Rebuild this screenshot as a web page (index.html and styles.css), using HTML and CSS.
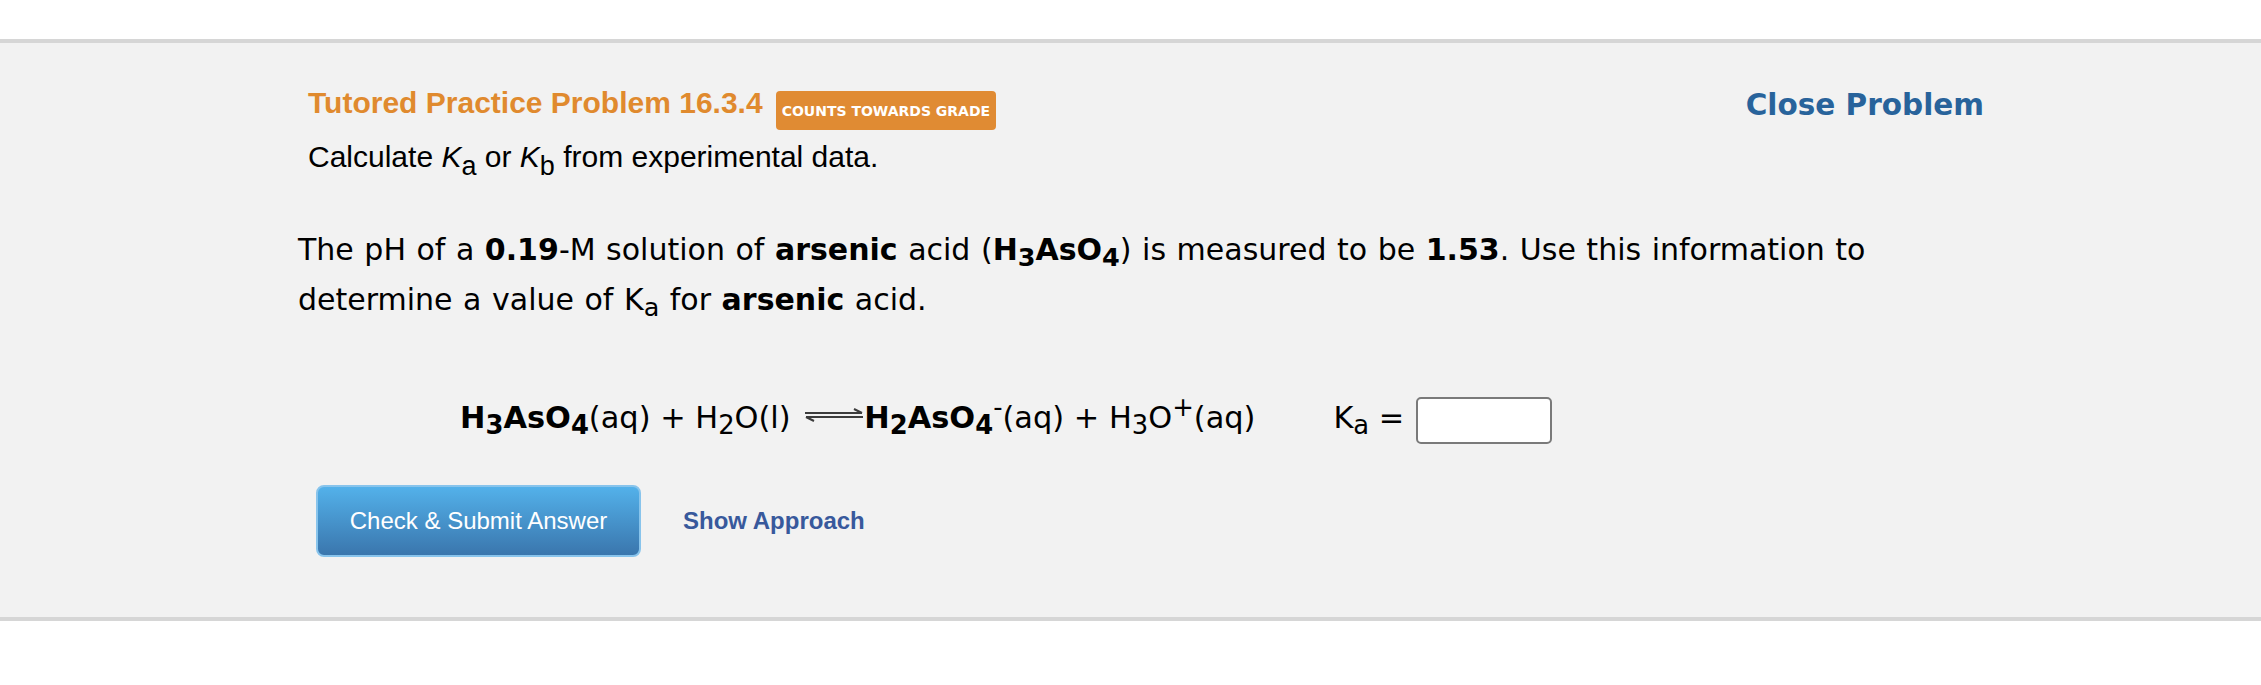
FILE: index.html
```html
<!DOCTYPE html>
<html lang="en">
<head>
<meta charset="utf-8">
<title>Tutored Practice Problem 16.3.4</title>
<link rel="stylesheet" href="styles.css">
</head>
<body>
<section class="panel">
  <div class="content">
    <header class="head">
      <div class="title-group">
        <h1 class="title">Tutored Practice Problem 16.3.4</h1>
        <span class="badge">COUNTS TOWARDS GRADE</span>
      </div>
      <a class="close" href="#">Close Problem</a>
    </header>
    <p class="subtitle">Calculate <i>K</i><sub>a</sub> or <i>K</i><sub>b</sub> from experimental data.</p>
    <p class="problem">The pH of a <b>0.19</b>-M solution of <b>arsenic</b> acid (<b>H<sub>3</sub>AsO<sub>4</sub></b>) is measured to be <b>1.53</b>. Use this information to determine a value of K<sub>a</sub> for <b>arsenic</b> acid.</p>
    <div class="equation-row">
      <div class="equation"><b>H<sub>3</sub>AsO<sub>4</sub></b>(aq) + H<sub>2</sub>O(l) <svg class="arrow" width="60" height="14" viewBox="0 0 60 14"><path d="M1 5H58M58 5L50 1M2 9H59M2 9L10 13" fill="none" stroke="#3c3c3c" stroke-width="2"/></svg><b>H<sub>2</sub>AsO<sub>4</sub></b><sup>-</sup>(aq) + H<sub>3</sub>O<sup>+</sup>(aq)</div>
      <label class="answer"><span class="answer-label">K<sub>a</sub> =</span><input class="answer-input" type="text"></label>
    </div>
    <div class="actions">
      <button class="submit" type="button">Check &amp; Submit Answer</button>
      <a class="approach" href="#">Show Approach</a>
    </div>
  </div>
</section>
</body>
</html>
```
FILE: styles.css
```css
html, body {
  margin: 0;
  padding: 0;
  background: #ffffff;
}

.panel {
  margin-top: 39px;
  background: #f2f2f2;
  border-top: 4px solid #d6d6d6;
  border-bottom: 4px solid #d6d6d6;
}

.content {
  padding: 40px 277px 60px 298px;
}

.head {
  display: flex;
  justify-content: space-between;
  align-items: flex-start;
  padding-left: 10px;
}

.title-group {
  display: flex;
  align-items: flex-start;
  gap: 13px;
}

.title {
  margin: 0;
  font-family: "Liberation Sans", Arial, sans-serif;
  font-weight: bold;
  font-size: 30px;
  line-height: 39px;
  color: #e08a2e;
}

.badge {
  margin-top: 8px;
  height: 39px;
  box-sizing: border-box;
  padding: 2px 6px 0;
  background: #e08b33;
  border-radius: 4px;
  color: #ffffff;
  font-family: "DejaVu Sans", Verdana, sans-serif;
  font-weight: bold;
  font-size: 14px;
  line-height: 37px;
  white-space: nowrap;
}

.close {
  margin-top: 3px;
  font-family: "DejaVu Sans", Verdana, sans-serif;
  font-weight: bold;
  font-size: 29.5px;
  line-height: 39px;
  color: #28639b;
  text-decoration: none;
}

sub, sup {
  line-height: 0;
}

.subtitle {
  margin: 7px 0 0;
  padding-left: 10px;
  font-family: "Liberation Sans", Arial, sans-serif;
  font-size: 30px;
  line-height: 40px;
  color: #000;
}

.subtitle sub {
  font-size: 0.9em;
  vertical-align: -0.28em;
}

.problem {
  margin: 48px 0 0;
  font-family: "DejaVu Sans", Verdana, sans-serif;
  font-size: 30px;
  word-spacing: 1px;
  line-height: 50px;
  color: #000;
}

.problem sub {
  font-size: 0.85em;
  vertical-align: -0.25em;
}

.equation-row {
  display: flex;
  align-items: flex-start;
  margin-top: 72px;
  padding-left: 162px;
}

.equation, .answer-label {
  margin-top: 2px;
  font-family: "DejaVu Sans", Verdana, sans-serif;
  font-size: 30.4px;
  line-height: 38px;
  color: #000;
  white-space: nowrap;
}

.equation sub, .answer-label sub {
  font-size: 0.85em;
  vertical-align: -0.25em;
}

.equation sup {
  font-size: 0.85em;
  vertical-align: 0.45em;
}

.arrow {
  margin-left: 4px;
  vertical-align: 6px;
}

.answer {
  display: flex;
  align-items: flex-start;
  margin-left: 78px;
}

.answer-input {
  margin: 0 0 0 12px;
  width: 136px;
  height: 47px;
  box-sizing: border-box;
  border: 2px solid #7a7a7a;
  border-radius: 5px;
  background: #ffffff;
}

.actions {
  display: flex;
  align-items: center;
  gap: 42px;
  margin-top: 41px;
  padding-left: 18px;
}

.submit {
  width: 325px;
  height: 72px;
  box-sizing: border-box;
  border: 2px solid #88c4ec;
  border-radius: 8px;
  background: linear-gradient(to bottom, #53b1ea, #3a76ad);
  color: #ffffff;
  font-family: "Liberation Sans", Arial, sans-serif;
  font-size: 24px;
  padding: 0;
}

.approach {
  font-family: "Liberation Sans", Arial, sans-serif;
  font-weight: bold;
  font-size: 24px;
  color: #38599c;
  text-decoration: none;
}
```
